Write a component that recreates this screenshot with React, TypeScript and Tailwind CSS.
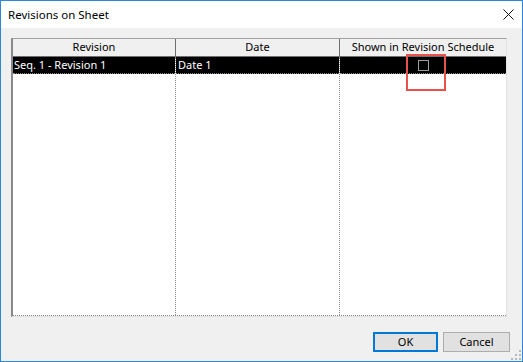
import React from "react";

const font = { fontFamily: '"Noto Sans", "Liberation Sans", sans-serif' };

function Grip() {
  // resize grip dots at the bottom-right corner
  const dots = [
    [8, 0],
    [8, 4],
    [4, 4],
    [8, 8],
    [4, 8],
    [0, 8],
  ];
  return (
    <svg width="10" height="10" viewBox="0 0 10 10" className="absolute right-[1px] bottom-[1px]">
      {dots.map(([x, y], i) => (
        <rect key={i} x={x} y={y} width="2" height="2" fill="#b9b9b9" />
      ))}
    </svg>
  );
}

export default function App() {
  return (
    <div
      className="relative w-[523px] h-[362px] border border-[#2b88d8] bg-[#f0f0f0] flex flex-col text-[11px] text-black"
      style={font}
    >
      {/* title bar */}
      <div className="h-[27px] bg-white flex items-center justify-between pl-[7px] pr-[8px]">
        <span className="text-[11.5px]">Revisions on Sheet</span>
        <svg width="11" height="11" viewBox="0 0 11 11">
          <path d="M0.5 0.5 L10.5 10.5 M10.5 0.5 L0.5 10.5" stroke="#111" strokeWidth="1" />
        </svg>
      </div>

      {/* table */}
      <div className="flex-1 flex flex-col px-[10px] pt-[10px]">
        <div className="w-[496px] h-[279px] flex flex-col bg-white border-t border-t-[#a0a0a0] border-l-2 border-l-[#8a8a8a] border-r border-r-[#e3e3e3] border-b border-b-[#e3e3e3]">
          <div className="h-[18px] flex bg-[#f0f0f0] border-b border-[#6e6e6e] shrink-0">
            <div className="w-[163px] border-r border-[#6e6e6e] flex items-center justify-center">Revision</div>
            <div className="w-[164px] border-r border-[#6e6e6e] flex items-center justify-center">Date</div>
            <div className="flex-1 flex items-center justify-center">Shown in Revision Schedule</div>
          </div>
          <div className="flex-1 flex border-b border-dotted border-[#8a8a8a]">
            <div className="w-[163px] border-r border-dotted border-[#8a8a8a] flex flex-col">
              <div className="h-[17px] bg-black text-white pl-[1px] flex items-center border-b border-dotted border-[#8a8a8a]">
                Seq. 1 - Revision 1
              </div>
            </div>
            <div className="w-[164px] border-r border-dotted border-[#8a8a8a] flex flex-col">
              <div className="h-[17px] bg-black text-white pl-[2px] flex items-center border-b border-dotted border-[#8a8a8a]">
                Date 1
              </div>
            </div>
            <div className="flex-1 flex flex-col">
              <div className="h-[17px] bg-black flex items-center justify-center border-b border-dotted border-[#8a8a8a] pl-[1px]">
                <div className="w-[11px] h-[11px] border border-[#a0a0a0] bg-black" />
              </div>
            </div>
          </div>
        </div>

        {/* buttons */}
        <div className="flex justify-end gap-[5px] pr-[2px] mt-[15px]">
          <button className="w-[65px] h-[20px] bg-[#e1e1e1] border-2 border-[#0078d7] flex items-center justify-center">
            OK
          </button>
          <button className="w-[67px] h-[20px] bg-[#e1e1e1] border border-[#adadad] flex items-center justify-center">
            Cancel
          </button>
        </div>
      </div>

      {/* highlight annotation */}
      <div className="absolute left-[405px] top-[53px] w-[40px] h-[37px] border-2 border-[#e8524a]" />
      <Grip />
    </div>
  );
}
